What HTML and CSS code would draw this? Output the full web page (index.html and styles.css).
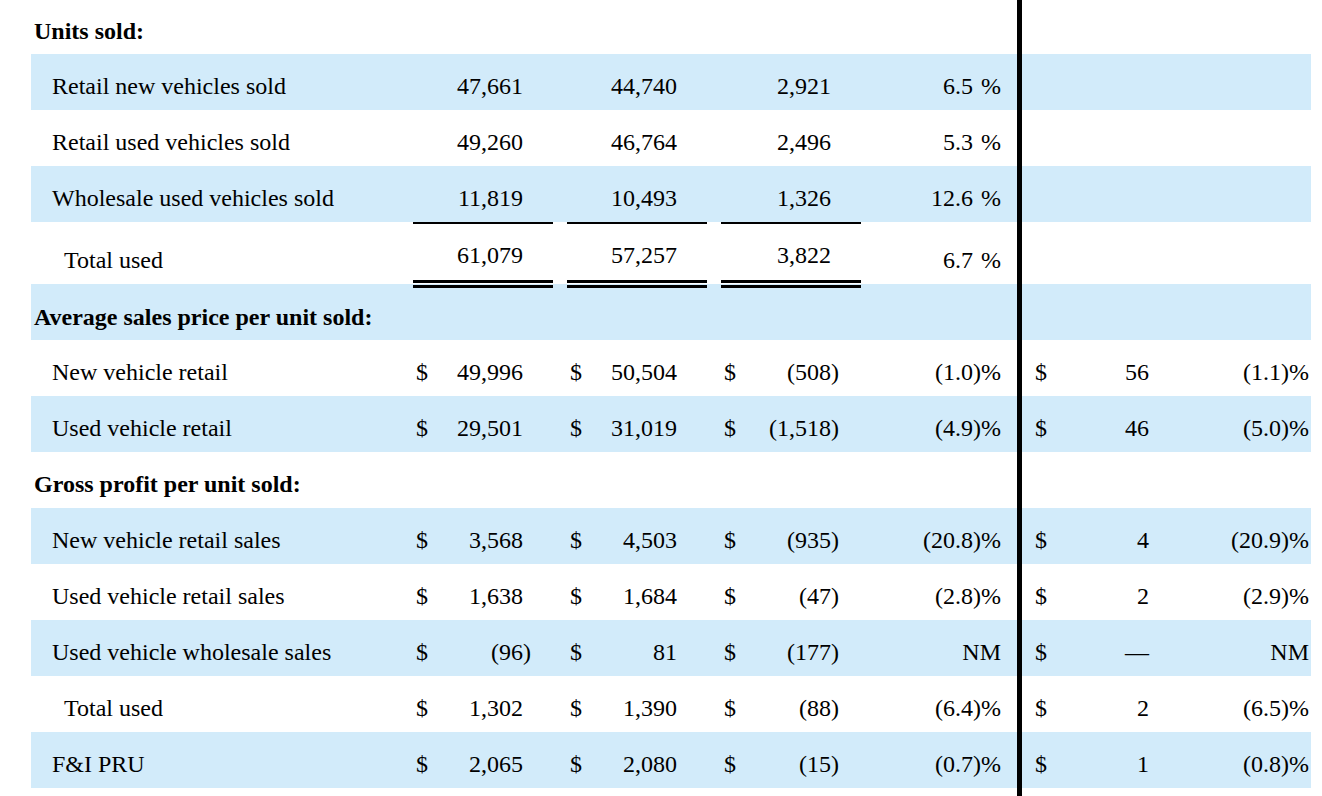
FILE: index.html
```html
<!DOCTYPE html>
<html lang="en">
<head>
<meta charset="utf-8">
<title>Units sold</title>
<link rel="stylesheet" href="styles.css">
</head>
<body>
<div class="sheet">
  <div class="row units">
    <div class="label head">Units sold:</div>
    <div class="side"></div>
  </div>

  <div class="row band">
    <div class="label">Retail new vehicles sold</div>
    <div class="num"><span class="amt">47,661<span class="par"></span></span></div>
    <div class="num"><span class="amt">44,740<span class="par"></span></span></div>
    <div class="num"><span class="amt">2,921<span class="par"></span></span></div>
    <div class="pct">6.5<span class="par"></span>%</div>
    <div class="side"></div>
  </div>

  <div class="row">
    <div class="label">Retail used vehicles sold</div>
    <div class="num"><span class="amt">49,260<span class="par"></span></span></div>
    <div class="num"><span class="amt">46,764<span class="par"></span></span></div>
    <div class="num"><span class="amt">2,496<span class="par"></span></span></div>
    <div class="pct">5.3<span class="par"></span>%</div>
    <div class="side"></div>
  </div>

  <div class="row band">
    <div class="label">Wholesale used vehicles sold</div>
    <div class="num"><span class="amt">11,819<span class="par"></span></span></div>
    <div class="num"><span class="amt">10,493<span class="par"></span></span></div>
    <div class="num"><span class="amt">1,326<span class="par"></span></span></div>
    <div class="pct">12.6<span class="par"></span>%</div>
    <div class="side"></div>
  </div>

  <div class="row total">
    <div class="label sub">Total used</div>
    <div class="num ruled"><span class="amt">61,079<span class="par"></span></span></div>
    <div class="num ruled"><span class="amt">57,257<span class="par"></span></span></div>
    <div class="num ruled"><span class="amt">3,822<span class="par"></span></span></div>
    <div class="pct">6.7<span class="par"></span>%</div>
    <div class="side"></div>
  </div>

  <div class="row band avg">
    <div class="label head">Average sales price per unit sold:</div>
    <div class="side"></div>
  </div>

  <div class="row">
    <div class="label">New vehicle retail</div>
    <div class="num"><span class="cur">$</span><span class="amt">49,996<span class="par"></span></span></div>
    <div class="num"><span class="cur">$</span><span class="amt">50,504<span class="par"></span></span></div>
    <div class="num"><span class="cur">$</span><span class="amt">(508<span class="par">)</span></span></div>
    <div class="pct">(1.0<span class="par">)</span>%</div>
    <div class="side">
      <div class="snum"><span class="cur">$</span><span class="amt">56</span></div>
      <div class="spct">(1.1<span class="par">)</span>%</div>
    </div>
  </div>

  <div class="row band">
    <div class="label">Used vehicle retail</div>
    <div class="num"><span class="cur">$</span><span class="amt">29,501<span class="par"></span></span></div>
    <div class="num"><span class="cur">$</span><span class="amt">31,019<span class="par"></span></span></div>
    <div class="num"><span class="cur">$</span><span class="amt">(1,518<span class="par">)</span></span></div>
    <div class="pct">(4.9<span class="par">)</span>%</div>
    <div class="side">
      <div class="snum"><span class="cur">$</span><span class="amt">46</span></div>
      <div class="spct">(5.0<span class="par">)</span>%</div>
    </div>
  </div>

  <div class="row">
    <div class="label head">Gross profit per unit sold:</div>
    <div class="side"></div>
  </div>

  <div class="row band">
    <div class="label">New vehicle retail sales</div>
    <div class="num"><span class="cur">$</span><span class="amt">3,568<span class="par"></span></span></div>
    <div class="num"><span class="cur">$</span><span class="amt">4,503<span class="par"></span></span></div>
    <div class="num"><span class="cur">$</span><span class="amt">(935<span class="par">)</span></span></div>
    <div class="pct">(20.8<span class="par">)</span>%</div>
    <div class="side">
      <div class="snum"><span class="cur">$</span><span class="amt">4</span></div>
      <div class="spct">(20.9<span class="par">)</span>%</div>
    </div>
  </div>

  <div class="row">
    <div class="label">Used vehicle retail sales</div>
    <div class="num"><span class="cur">$</span><span class="amt">1,638<span class="par"></span></span></div>
    <div class="num"><span class="cur">$</span><span class="amt">1,684<span class="par"></span></span></div>
    <div class="num"><span class="cur">$</span><span class="amt">(47<span class="par">)</span></span></div>
    <div class="pct">(2.8<span class="par">)</span>%</div>
    <div class="side">
      <div class="snum"><span class="cur">$</span><span class="amt">2</span></div>
      <div class="spct">(2.9<span class="par">)</span>%</div>
    </div>
  </div>

  <div class="row band">
    <div class="label">Used vehicle wholesale sales</div>
    <div class="num"><span class="cur">$</span><span class="amt">(96<span class="par">)</span></span></div>
    <div class="num"><span class="cur">$</span><span class="amt">81<span class="par"></span></span></div>
    <div class="num"><span class="cur">$</span><span class="amt">(177<span class="par">)</span></span></div>
    <div class="pct">NM</div>
    <div class="side">
      <div class="snum"><span class="cur">$</span><span class="amt">—</span></div>
      <div class="spct">NM</div>
    </div>
  </div>

  <div class="row">
    <div class="label sub">Total used</div>
    <div class="num"><span class="cur">$</span><span class="amt">1,302<span class="par"></span></span></div>
    <div class="num"><span class="cur">$</span><span class="amt">1,390<span class="par"></span></span></div>
    <div class="num"><span class="cur">$</span><span class="amt">(88<span class="par">)</span></span></div>
    <div class="pct">(6.4<span class="par">)</span>%</div>
    <div class="side">
      <div class="snum"><span class="cur">$</span><span class="amt">2</span></div>
      <div class="spct">(6.5<span class="par">)</span>%</div>
    </div>
  </div>

  <div class="row band">
    <div class="label">F&amp;I PRU</div>
    <div class="num"><span class="cur">$</span><span class="amt">2,065<span class="par"></span></span></div>
    <div class="num"><span class="cur">$</span><span class="amt">2,080<span class="par"></span></span></div>
    <div class="num"><span class="cur">$</span><span class="amt">(15<span class="par">)</span></span></div>
    <div class="pct">(0.7<span class="par">)</span>%</div>
    <div class="side">
      <div class="snum"><span class="cur">$</span><span class="amt">1</span></div>
      <div class="spct">(0.8<span class="par">)</span>%</div>
    </div>
  </div>

  <div class="row tail">
    <div class="side"></div>
  </div>
</div>
</body>
</html>
```

FILE: styles.css
```css
html, body {
  margin: 0;
  padding: 0;
  background: #ffffff;
}

body {
  font-family: "Liberation Serif", "Times New Roman", serif;
  font-size: 24px;
  line-height: 26px;
  color: #000000;
  overflow: hidden;
}

.sheet {
  padding-left: 31px;
  width: 1280px;
}

.row {
  display: grid;
  grid-template-columns: 382px 154px 154px 140px 156px 143px 151px;
  height: 56px;
  box-sizing: border-box;
}

.row > .label,
.row > .num,
.row > .pct {
  padding-top: 19px;
  box-sizing: border-box;
  white-space: nowrap;
}

.row.band {
  background: #d2ebfa;
}

.row.units {
  height: 54px;
}

.row.units > .label {
  padding-top: 18px;
}

.row.total {
  height: 66px;
  background: linear-gradient(to bottom, #ffffff 62px, #d2ebfa 62px);
}

.row.avg {
  height: 52px;
}

.row.avg > .label {
  padding-top: 16px;
}

.row.tail {
  height: 8px;
}

.label {
  padding-left: 21px;
}

.label.head {
  grid-column: 1 / 6;
  padding-left: 3px;
  font-weight: bold;
}

.label.sub {
  padding-left: 33px;
}

.num {
  display: flex;
  padding-left: 3px;
  padding-right: 22px;
}

.num:nth-child(2),
.num:nth-child(3) {
  margin-right: 14px;
}

.amt {
  margin-left: auto;
}

.par {
  display: inline-block;
  width: 8px;
  text-align: left;
}

.pct {
  text-align: right;
  padding-right: 16px;
}

.row.total > .label {
  padding-top: 25px;
}

.row.total > .num.ruled {
  border-top: 2px solid #000000;
  border-bottom: 3px solid #000000;
  padding-top: 18px;
  height: 66px;
  background: linear-gradient(#000000, #000000) no-repeat left bottom 2px / 100% 3px;
}

.row.total > .pct {
  padding-top: 25px;
}

.side {
  grid-column: 6 / 8;
  display: flex;
  border-left: 5px solid #000000;
}

.snum {
  display: flex;
  width: 138px;
  box-sizing: border-box;
  padding: 19px 11px 0 13px;
  white-space: nowrap;
}

.spct {
  flex: 1;
  text-align: right;
  padding: 19px 2px 0 0;
  white-space: nowrap;
}
```
